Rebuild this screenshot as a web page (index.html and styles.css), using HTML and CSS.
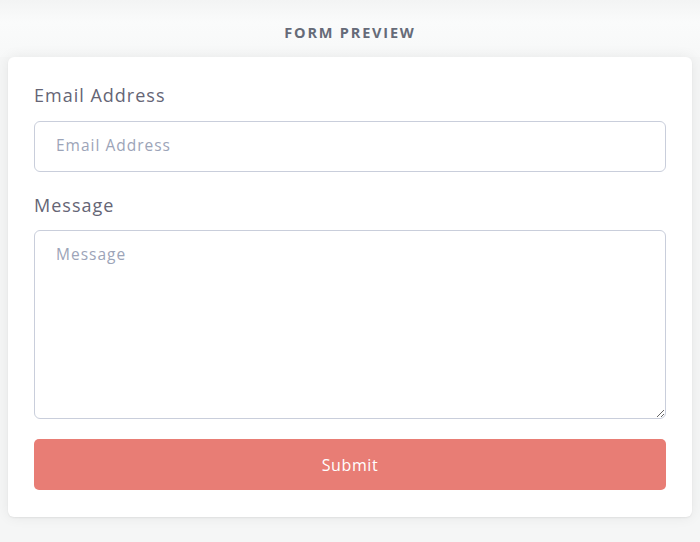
FILE: index.html
```html
<!DOCTYPE html>
<html lang="en">
<head>
<meta charset="utf-8">
<title>Form Preview</title>
<link rel="stylesheet" href="styles.css">
</head>
<body>
<header class="top">
  <h1 class="title">FORM PREVIEW</h1>
</header>
<main class="card">
  <form class="form">
    <label class="label" for="email">Email Address</label>
    <input class="field" id="email" type="email" placeholder="Email Address">
    <label class="label label-msg" for="msg">Message</label>
    <textarea class="field area" id="msg" placeholder="Message"></textarea>
    <button class="submit" type="button">Submit</button>
  </form>
</main>
</body>
</html>
```

FILE: styles.css
```css
* { box-sizing: border-box; }
html, body { margin: 0; padding: 0; }
body {
  width: 700px;
  height: 542px;
  overflow: hidden;
  background: #f5f6f6;
  font-family: "Open Sans", "Lato", sans-serif;
}
.top {
  height: 57px;
  display: flex;
  align-items: center;
  justify-content: center;
  padding-top: 8px;
  background: linear-gradient(#f3f4f4, #fafbfb 40%, #f7f8f8);
}
.title {
  margin: 0;
  font-size: 14.5px;
  font-weight: 700;
  letter-spacing: 1.8px;
  color: #666b78;
}
.card {
  margin: 0 8px;
  height: 460px;
  background: #ffffff;
  border-radius: 6px;
  box-shadow: 0 0 14px rgba(0, 0, 0, 0.07), 0 1px 2px rgba(0, 0, 0, 0.06);
  padding: 26px 26px 27px;
}
.form {
  display: flex;
  flex-direction: column;
}
.label {
  font-size: 18px;
  line-height: 24px;
  letter-spacing: 1px;
  color: #656575;
  margin-bottom: 14px;
}
.label-msg {
  margin-top: 21px;
  margin-bottom: 13px;
}
.field {
  width: 100%;
  height: 51px;
  border: 1px solid #c9cedb;
  border-radius: 6px;
  padding: 0 21px 3px;
  font-family: inherit;
  font-size: 15.5px;
  letter-spacing: 1px;
  color: #333;
  background: #fff;
  outline: none;
}
.field::placeholder {
  color: #9ca4b8;
}
.area {
  height: 189px;
  padding: 12px 21px;
  resize: vertical;
}
.submit {
  margin-top: 20px;
  height: 51px;
  width: 100%;
  border: none;
  border-radius: 5px;
  background: #e87d75;
  color: #ffffff;
  font-family: inherit;
  font-size: 16px;
  letter-spacing: 0.6px;
}
```
